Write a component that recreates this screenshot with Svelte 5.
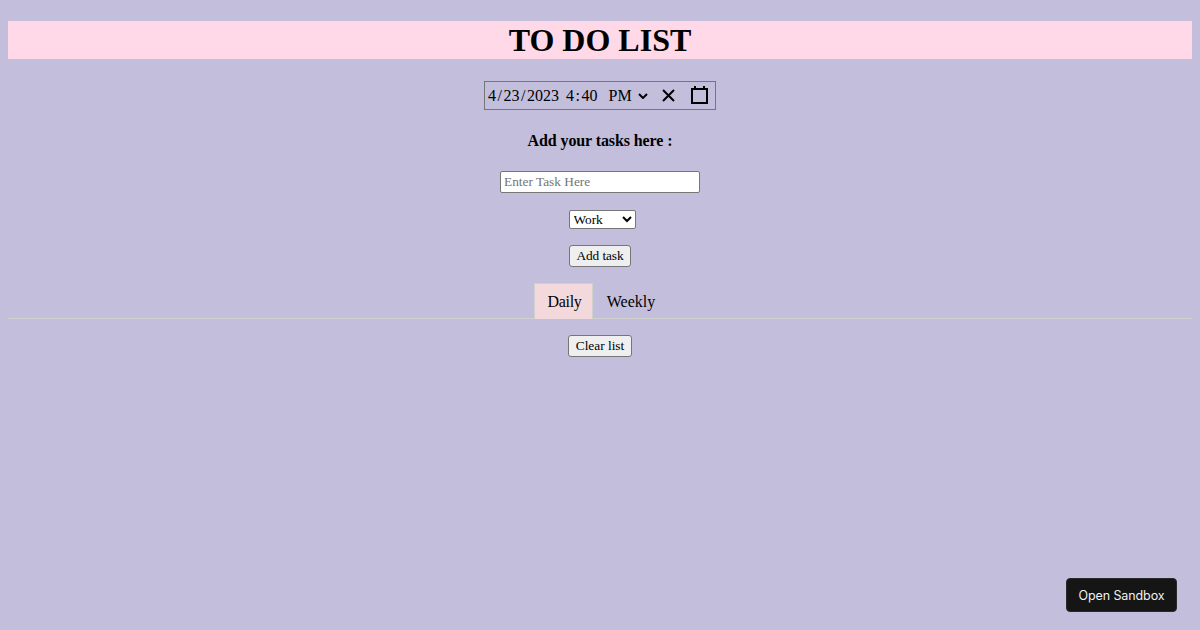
<script>
  let active = $state('daily');
</script>

<div class="page">
  <h1>TO DO LIST</h1>
  <div class="center">
    <div class="when">
      <span>4</span><span class="sep">/</span><span>23</span><span class="sep">/</span><span>2023</span>
      <span class="time">4</span><span class="sep">:</span><span>40</span>
      <span class="ampm">PM</span>
      <svg class="chevron" width="10" height="6" viewBox="0 0 10 6" aria-hidden="true">
        <path d="M1 1l4 4 4-4" fill="none" stroke="#000" stroke-width="2" />
      </svg>
      <svg class="cross" width="13" height="13" viewBox="0 0 13 13" aria-hidden="true">
        <path d="M1 1l11 11M12 1L1 12" fill="none" stroke="#000" stroke-width="2" />
      </svg>
      <svg class="calendar" width="17" height="18" viewBox="0 0 17 18" aria-hidden="true">
        <path d="M1 3h15v14H1zM4 0v3M13 0v3" fill="none" stroke="#000" stroke-width="2" />
      </svg>
    </div>
    <h4>Add your tasks here :</h4>
    <input class="task" type="text" placeholder="Enter Task Here" />
    <select class="kind">
      <option>Work</option>
      <option>Personal</option>
    </select>
    <button class="add">Add task</button>
  </div>
  <div class="tabs">
    <button class="tab" class:active={active === 'daily'} onclick={() => (active = 'daily')}>Daily</button>
    <button class="tab" class:active={active === 'weekly'} onclick={() => (active = 'weekly')}>Weekly</button>
  </div>
  <div class="center">
    <button class="clear">Clear list</button>
  </div>
</div>
<a class="sandbox" href="#sandbox">Open Sandbox</a>

<style>
  :global(body) {
    margin: 0;
    background: #c3bedc;
    font-family: "Liberation Serif", serif;
  }
  .page {
    padding: 21px 8px 0;
    min-height: 609px;
  }
  h1 {
    margin: 0;
    background: #ffd9e8;
    text-align: center;
    font-size: 32px;
    line-height: 38px;
    color: #000;
  }
  .center {
    display: flex;
    flex-direction: column;
    align-items: center;
  }
  .when {
    margin-top: 22px;
    box-sizing: border-box;
    width: 232px;
    height: 29px;
    display: flex;
    align-items: center;
    font-size: 16px;
    color: #000;
    border: 1px solid #767676;
    padding: 0 0 0 3px;
  }
  .sep {
    width: 7.5px;
    text-align: center;
  }
  .time {
    margin-left: 7px;
  }
  .ampm {
    margin-left: 11px;
  }
  .chevron {
    margin-left: 6px;
  }
  .cross {
    margin-left: 14px;
  }
  .calendar {
    margin-left: 16px;
    margin-bottom: 1px;
  }
  h4 {
    margin: 22px 0 0;
    font-size: 16px;
    line-height: 18px;
    letter-spacing: -0.1px;
  }
  .task {
    margin-top: 21px;
    box-sizing: border-box;
    width: 200px;
    height: 22px;
    font-family: "Liberation Serif", serif;
    font-size: 13.33px;
    padding: 1px 3px;
    border: 1px solid #767676;
    border-radius: 2px;
    background: #fff;
  }
  .kind {
    margin: 17px 0 0 4px;
    box-sizing: border-box;
    width: 67px;
    height: 19px;
    font-family: "Liberation Serif", serif;
    font-size: 13.33px;
    background: #fff;
    border: 1px solid #767676;
    border-radius: 2px;
  }
  .add,
  .clear {
    box-sizing: border-box;
    height: 22px;
    font-family: "Liberation Serif", serif;
    font-size: 13.33px;
    color: #000;
    background: #efefef;
    border: 1px solid #767676;
    border-radius: 3px;
  }
  .add {
    margin-top: 16px;
    width: 62px;
    padding: 0;
    letter-spacing: -0.1px;
  }
  .clear {
    margin-top: 16px;
    width: 64px;
    padding: 0;
  }
  .tabs {
    margin-top: 16px;
    display: flex;
    justify-content: center;
    border-bottom: 1px solid #d0d0cc;
    height: 35px;
    padding-left: 1px;
  }
  .tab {
    box-sizing: border-box;
    width: 74px;
    height: 36px;
    padding: 0 0 0 2px;
    font-family: "Liberation Serif", serif;
    font-size: 16px;
    color: #000;
    background: transparent;
    border: 1px solid transparent;
    border-bottom: 0;
  }
  .tab.active {
    width: 59px;
    letter-spacing: -0.3px;
    background: #f3d9dc;
    border-color: #d0d0cc;
  }
  .sandbox {
    position: fixed;
    right: 23px;
    bottom: 18px;
    box-sizing: border-box;
    width: 111px;
    height: 34px;
    display: flex;
    align-items: center;
    justify-content: center;
    background: #151515;
    color: #f0f0f0;
    border: 1px solid #2a2a2a;
    border-radius: 4px;
    font-family: Inter, sans-serif;
    font-size: 12.5px;
    letter-spacing: -0.1px;
    text-decoration: none;
  }
</style>
